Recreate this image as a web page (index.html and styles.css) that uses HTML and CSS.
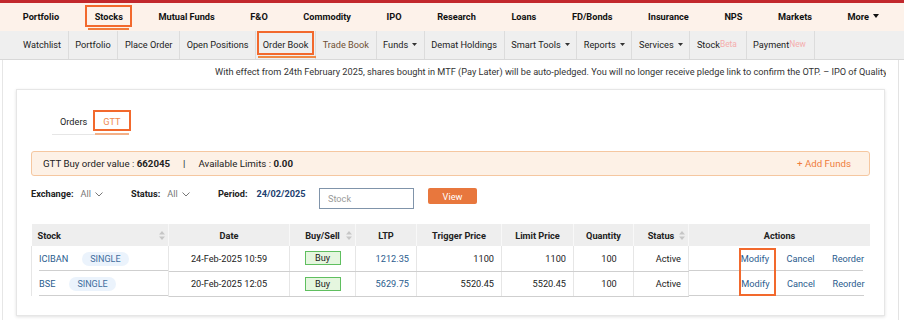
FILE: index.html
```html
<!DOCTYPE html>
<html lang="en">
<head>
<meta charset="utf-8">
<title>Order Book - GTT</title>
<link rel="stylesheet" href="styles.css">
</head>
<body>
<div class="top-rule"></div>
<nav class="main-nav">
  <a class="mn-item">Portfolio</a>
  <a class="mn-item active">Stocks</a>
  <a class="mn-item">Mutual Funds</a>
  <a class="mn-item">F&amp;O</a>
  <a class="mn-item">Commodity</a>
  <a class="mn-item">IPO</a>
  <a class="mn-item">Research</a>
  <a class="mn-item">Loans</a>
  <a class="mn-item">FD/Bonds</a>
  <a class="mn-item">Insurance</a>
  <a class="mn-item">NPS</a>
  <a class="mn-item">Markets</a>
  <a class="mn-item">More <svg class="caret" width="6" height="4" viewBox="0 0 6 4"><path d="M0 0h6L3 4z" fill="#111"/></svg></a>
</nav>
<nav class="sub-nav">
  <a class="sn-item">Watchlist</a>
  <a class="sn-item">Portfolio</a>
  <a class="sn-item">Place Order</a>
  <a class="sn-item">Open Positions</a>
  <a class="sn-item active">Order Book</a>
  <a class="sn-item visited">Trade Book</a>
  <a class="sn-item">Funds <svg class="caret" width="5" height="3" viewBox="0 0 5 3"><path d="M0 0h5L2.5 3z" fill="#333"/></svg></a>
  <a class="sn-item">Demat Holdings</a>
  <a class="sn-item">Smart Tools <svg class="caret" width="5" height="3" viewBox="0 0 5 3"><path d="M0 0h5L2.5 3z" fill="#333"/></svg></a>
  <a class="sn-item">Reports <svg class="caret" width="5" height="3" viewBox="0 0 5 3"><path d="M0 0h5L2.5 3z" fill="#333"/></svg></a>
  <a class="sn-item">Services <svg class="caret" width="5" height="3" viewBox="0 0 5 3"><path d="M0 0h5L2.5 3z" fill="#333"/></svg></a>
  <a class="sn-item">Stock<sup class="tag">Beta</sup></a>
  <a class="sn-item">Payment<sup class="tag">New</sup></a>
  <span class="sn-item empty"></span>
</nav>
<main class="page">
  <div class="ticker">With effect from 24th February 2025, shares bought in MTF (Pay Later) will be auto-pledged. You will no longer receive pledge link to confirm the OTP. – IPO of Quality Power Electrical Equipments Limited is open for subscription.</div>
  <section class="card">
    <div class="tabs">
      <a class="tab">Orders</a>
      <a class="tab active">GTT</a>
    </div>
    <div class="banner">
      <div class="banner-info">
        <span>GTT Buy order value : <b>662045</b></span>
        <span class="pipe">|</span>
        <span>Available Limits : <b>0.00</b></span>
      </div>
      <a class="add-funds">+ Add Funds</a>
    </div>
    <div class="filters">
      <div class="filter f-exchange"><span class="f-label">Exchange:</span><span class="f-value">All <svg class="chev" width="8" height="5" viewBox="0 0 8 5"><path d="M0.5 0.5L4 4L7.5 0.5" fill="none" stroke="#777" stroke-width="1"/></svg></span></div>
      <div class="filter f-status"><span class="f-label">Status:</span><span class="f-value">All <svg class="chev" width="8" height="5" viewBox="0 0 8 5"><path d="M0.5 0.5L4 4L7.5 0.5" fill="none" stroke="#777" stroke-width="1"/></svg></span></div>
      <div class="filter f-period"><span class="f-label">Period:</span><span class="f-date">24/02/2025</span></div>
      <input class="stock-input" type="text" placeholder="Stock">
      <button class="view-btn">View</button>
    </div>
    <div class="table-wrap">
      <table class="gtt-table">
        <colgroup>
          <col style="width:137px"><col style="width:121px"><col style="width:66px"><col style="width:61px"><col style="width:85px"><col style="width:72px"><col style="width:60px"><col style="width:55px"><col style="width:182px">
        </colgroup>
        <thead>
          <tr>
            <th class="left">Stock<svg class="sort" width="6" height="9" viewBox="0 0 6 9"><path d="M3 0L6 3.5H0z M3 9L0 5.5H6z" fill="#c6c6c6"/></svg></th>
            <th>Date</th>
            <th>Buy/Sell<svg class="sort" width="6" height="9" viewBox="0 0 6 9"><path d="M3 0L6 3.5H0z M3 9L0 5.5H6z" fill="#c6c6c6"/></svg></th>
            <th>LTP</th>
            <th>Trigger Price</th>
            <th>Limit Price</th>
            <th>Quantity</th>
            <th>Status<svg class="sort" width="6" height="9" viewBox="0 0 6 9"><path d="M3 0L6 3.5H0z M3 9L0 5.5H6z" fill="#c6c6c6"/></svg></th>
            <th>Actions</th>
          </tr>
        </thead>
        <tbody>
          <tr>
            <td class="c-stock"><a class="link">ICIBAN</a><span class="pill">SINGLE</span></td>
            <td class="c-center">24-Feb-2025 10:59</td>
            <td class="c-center"><span class="buy">Buy</span></td>
            <td class="c-right link">1212.35</td>
            <td class="c-right">1100</td>
            <td class="c-right">1100</td>
            <td class="c-qty">100</td>
            <td class="c-right">Active</td>
            <td class="c-actions"><div class="actions"><a class="link">Modify</a><a class="link">Cancel</a><a class="link">Reorder</a></div></td>
          </tr>
          <tr>
            <td class="c-stock"><a class="link">BSE</a><span class="pill">SINGLE</span></td>
            <td class="c-center">20-Feb-2025 12:05</td>
            <td class="c-center"><span class="buy">Buy</span></td>
            <td class="c-right link">5629.75</td>
            <td class="c-right">5520.45</td>
            <td class="c-right">5520.45</td>
            <td class="c-qty">100</td>
            <td class="c-right">Active</td>
            <td class="c-actions"><div class="actions"><a class="link">Modify</a><a class="link">Cancel</a><a class="link">Reorder</a></div></td>
          </tr>
        </tbody>
      </table>
      <div class="modify-mark"></div>
    </div>
  </section>
</main>
</body>
</html>
```
FILE: styles.css
```css
* { box-sizing: border-box; margin: 0; padding: 0; }
html, body { width: 904px; height: 320px; overflow: hidden; }
body {
  font-family: Roboto, "Liberation Sans", Arial, sans-serif;
  font-size: 9.2px;
  color: #222;
  background: #fff;
}
a { text-decoration: none; color: inherit; cursor: pointer; }

.top-rule { height: 3px; background: #c2282d; }

/* main nav */
.main-nav {
  display: flex;
  height: 28px;
  padding-left: 5px;
  background: #fdf2ea;
}
.mn-item {
  position: relative;
  display: flex;
  align-items: center;
  padding: 0 17.8px 2px;
  font-weight: 700;
  color: #111;
  white-space: nowrap;
}
.mn-item .caret { margin-left: 4px; }
.mn-item.active::before {
  content: "";
  position: absolute;
  left: 8px; right: 9px; top: 2px; bottom: 4px;
  border: 2px solid #f2692d;
}
.mn-item.active::after {
  content: "";
  position: absolute;
  left: 11px; right: 12px; bottom: 1px; height: 2px;
  background: #f27b3b;
}

/* sub nav */
.sub-nav {
  display: flex;
  height: 29px;
  padding-left: 15px;
  background: #efefef;
  border-bottom: 1px solid #d8d8d8;
}
.sn-item {
  position: relative;
  display: flex;
  align-items: center;
  padding: 0 6.6px 2px;
  border-right: 1px solid #dcdcdc;
  color: #222;
  white-space: nowrap;
}
.sn-item:first-child { padding-left: 8px; }
.sn-item.visited { color: #6f4f33; }
.sn-item .caret { margin-left: 4px; margin-top: 1px; }
.sn-item.empty { width: 86px; border-right: none; }
.sn-item.active::before {
  content: "";
  position: absolute;
  left: 1px; right: 1px; top: 0; bottom: 4px;
  border: 2px solid #f2692d;
}
.sn-item.active::after {
  content: "";
  position: absolute;
  left: 2px; right: -1px; bottom: 1px; height: 2px;
  background: #f08a45;
}
.tag {
  font-size: 8.4px;
  line-height: 0;
  color: #f5adad;
  vertical-align: 5px;
  margin-right: 2px;
}

/* page */
.page {
  margin-left: 2px;
  width: 897px;
  height: 260px;
  border-left: 1px solid #e6e6e6;
  border-right: 1px solid #e3e3e3;
}
.ticker {
  height: 29px;
  margin: 0 12px 0 13px;
  padding: 6px 0 0 199px;
  line-height: 12px;
  white-space: nowrap;
  overflow: hidden;
  color: #333;
}

.card {
  margin-left: 13px;
  width: 869px;
  height: 227px;
  padding: 0 14px;
  background: #fff;
  border: 1px solid #e6e6e6;
  box-shadow: 0 1px 3px rgba(0,0,0,0.12);
}

/* tabs */
.tabs {
  display: flex;
  margin: 20px 0 0 21px;
  width: 75px;
  border-bottom: 1px solid #e6e6e6;
}
.tab {
  position: relative;
  padding: 6px 8px 6px;
  line-height: 12px;
  color: #222;
}
.tab.active { color: #ef8a4e; }
.tab.active::before {
  content: "";
  position: absolute;
  left: -2px; right: -2px; top: 0; bottom: 3px;
  border: 2px solid #f2692d;
}
.tab.active::after {
  content: "";
  position: absolute;
  left: 0; right: 0; bottom: -1px; height: 2px;
  background: #f3b087;
}

/* banner */
.banner {
  display: flex;
  align-items: center;
  justify-content: space-between;
  height: 25px;
  margin-top: 16px;
  padding: 0 18px 0 11px;
  background: #fdf1e6;
  border: 1px solid #f5c7a0;
  border-radius: 3px;
  font-size: 9.7px;
}
.banner-info { display: flex; align-items: center; }
.banner-info b { font-weight: 700; }
.pipe { margin: 0 13px; }
.add-funds { color: #ef7d3c; }

/* filters */
.filters {
  display: flex;
  align-items: flex-start;
  margin-top: 12px;
  height: 21px;
}
.filter {
  display: flex;
  align-items: center;
  height: 12px;
  line-height: 12px;
}
.f-label { font-weight: 700; margin-right: 7px; }
.f-value { color: #777; display: flex; align-items: center; }
.chev { margin-left: 4px; }
.f-exchange { width: 100px; }
.f-status { width: 87px; }
.f-period { width: 101px; }
.f-date { color: #1e416f; font-weight: 700; margin-left: 9px; }
.f-period .f-label { margin-right: 0; }
.stock-input {
  width: 95px;
  height: 21px;
  padding: 0 8px;
  border: 1px solid #8094aa;
  font: inherit;
  color: #333;
  outline: none;
}
.stock-input::placeholder { color: #9a9a9a; }
.view-btn {
  margin-left: 14px;
  width: 49px;
  height: 16px;
  background: #e8773d;
  color: #fff;
  border: none;
  border-radius: 2px;
  font: inherit;
}

/* table */
.table-wrap { position: relative; margin-top: 15px; }
.gtt-table {
  width: 839px;
  table-layout: fixed;
  border-collapse: collapse;
}
.gtt-table th {
  position: relative;
  height: 22px;
  padding: 0 6px;
  background: #eeeeee;
  border-right: 1px solid #f8f8f8;
  font-weight: 700;
  text-align: center;
  color: #222;
}
.gtt-table th:last-child { border-right: none; }
.gtt-table th.left { text-align: left; }
.sort {
  position: absolute;
  right: 3px;
  top: 7px;
}
.gtt-table td {
  height: 25px;
  padding: 0 7px;
  border-right: 1px solid #e6e6e6;
  border-bottom: 1px solid #cfcfcf;
  white-space: nowrap;
}
.gtt-table td:first-child {
  border-left: 1px solid #e6e6e6;
  border-bottom: none;
  background: linear-gradient(#cfcfcf, #cfcfcf) right bottom / calc(100% - 7px) 1px no-repeat;
}
.gtt-table td:last-child {
  border-right: none;
  border-bottom: none;
  padding-right: 6px;
  background: linear-gradient(#cfcfcf, #cfcfcf) left bottom / calc(100% - 7px) 1px no-repeat;
}
.link { color: #2b5c8e; }
.c-center { text-align: center; }
.c-right { text-align: right; }
.c-qty { text-align: center; padding-left: 18px !important; }
.pill {
  display: inline-block;
  margin-left: 14px;
  padding: 0 8px;
  height: 14px;
  line-height: 14px;
  border-radius: 7px;
  background: #ebf3fc;
  color: #3e6d9c;
  font-size: 9px;
}
.buy {
  display: inline-block;
  width: 36px;
  height: 14px;
  line-height: 12px;
  border: 1px solid #5fbf5f;
  background: #e5f6df;
  color: #222;
  text-align: center;
}
.actions {
  display: flex;
  justify-content: flex-end;
  gap: 17.5px;
}
.modify-mark {
  position: absolute;
  left: 708px;
  top: 24px;
  width: 37px;
  height: 48px;
  border: 2px solid #f2692d;
}
```
